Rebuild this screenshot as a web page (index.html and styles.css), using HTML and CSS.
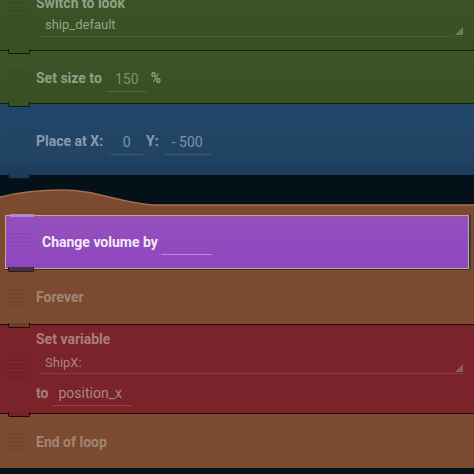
FILE: index.html
```html
<!DOCTYPE html>
<html>
<head>
<meta charset="utf-8">
<link rel="stylesheet" href="styles.css">
</head>
<body>
<div class="script">
  <div class="block green first">
    <div class="grip"></div>
    <div class="content">
      <div class="label">Switch to look</div>
      <div class="spinner"><span class="val">ship_default</span><span class="tri"></span></div>
    </div>
  </div>
  <div class="block green second">
    <div class="grip"></div>
    <div class="content row">
      <span class="label">Set size to</span>
      <span class="input w40">150</span>
      <span class="label">%</span>
    </div>
  </div>
  <div class="block blue">
    <div class="grip"></div>
    <div class="content row">
      <span class="label">Place at X:</span>
      <span class="input w33">0</span>
      <span class="label">Y:</span>
      <span class="input w47">- 500</span>
    </div>
  </div>
  <div class="forever">
    <svg class="hat" viewBox="0 0 474 17" width="474" height="17" preserveAspectRatio="none">
      <path d="M0 8 C 20 3, 38 1, 62 1 C 95 1, 118 13, 152 16 L474 16 L474 17 L0 17 Z" fill="#7c4a2e"/>
      <path d="M0 8 C 20 3, 38 1, 62 1 C 95 1, 118 13, 152 16 L474 16" fill="none" stroke="#a06f50" stroke-width="1.5"/>
    </svg>
    <div class="block brown hatbody">
      <div class="slot">
        <div class="block purple">
          <div class="grip"></div>
          <div class="content row">
            <span class="label">Change volume by</span>
            <span class="input w51"></span>
          </div>
        </div>
      </div>
      <div class="foreverrow">
        <div class="grip"></div>
        <div class="content row">
          <span class="label">Forever</span>
        </div>
      </div>
    </div>
  </div>
  <div class="block red">
    <div class="grip"></div>
    <div class="content">
      <div class="label">Set variable</div>
      <div class="spinner"><span class="val">ShipX:</span><span class="tri"></span></div>
      <div class="row torow">
        <span class="label">to</span>
        <span class="input w80 left">position_x</span>
      </div>
    </div>
  </div>
  <div class="block brown end">
    <div class="grip"></div>
    <div class="content row">
      <span class="label">End of loop</span>
    </div>
  </div>
</div>
</body>
</html>
```

FILE: styles.css
```css
* { box-sizing: border-box; }
html, body {
  margin: 0;
  padding: 0;
  width: 474px;
  height: 474px;
  overflow: hidden;
  background: #041118;
  font-family: Roboto, "Liberation Sans", sans-serif;
}
.script {
  display: flex;
  flex-direction: column;
  margin-top: -16px;
}
.block {
  position: relative;
  display: flex;
  align-items: center;
  border-bottom: 1px solid #141a0c;
}
.block::after {
  content: "";
  position: absolute;
  left: 8px;
  bottom: -4px;
  width: 20px;
  height: 4px;
  border: 1px solid #121a10;
  border-top: none;
  border-radius: 0 0 2px 2px;
  z-index: 2;
}
.grip {
  flex: none;
  width: 22px;
  height: 18px;
  margin: 0 7px 0 7px;
}
.content {
  flex: 1;
  min-width: 0;
}
.row {
  display: flex;
  align-items: center;
}
.label {
  font-weight: bold;
  font-size: 14px;
  line-height: 17px;
  white-space: nowrap;
}
.input {
  display: inline-block;
  font-size: 14px;
  line-height: 17px;
  text-align: center;
  border-bottom: 1px solid;
  padding-top: 3px;
  padding-bottom: 3px;
  margin: 0 4px;
  position: relative;
  top: 1px;
}
.w40 { width: 40px; margin-left: 5px; }
.w33 { width: 33px; margin-left: 7px; margin-right: 3px; }
.w47 { width: 47px; margin-left: 5px; }
.w51 { width: 51px; margin-left: 3px; }
.w80 { width: 80px; }
.left { text-align: left; padding-left: 6px; margin-left: 4px; }

.spinner {
  position: relative;
  margin-left: 4px;
  margin-right: 11px;
  height: 25px;
  padding-left: 5px;
  padding-top: 4px;
  font-size: 13px;
  line-height: 17px;
  border-bottom: 1px solid;
}
.tri {
  position: absolute;
  right: 0;
  bottom: 1px;
  width: 0;
  height: 0;
  border-left: 8px solid transparent;
  border-bottom: 8px solid;
}

/* green */
.green { background: linear-gradient(#3d5428, #384f22); border-bottom-color: #151d0d; }
.green::after { background: #385022; }
.green .label { color: #93a085; }
.green .spinner { color: #97a28c; border-bottom-color: #465d33; }
.green .tri { color: #6d7d62; }
.green .input { color: #7f9070; border-bottom-color: #53693f; }
.green .grip { background: repeating-linear-gradient(to bottom, #364c21 0 1px, transparent 1px 4px); }
.first { height: 67px; align-items: flex-start; padding-top: 11px; }
.first .grip { margin-top: 8px; height: 30px; }
.second { height: 53px; padding-top: 3px; }

/* blue */
.blue { background: linear-gradient(#224667 0, #214465 70%, #1d3a5b 100%); height: 71px; border-bottom: none; padding-top: 4px; }
.blue::after { background: #1d3a5a; border-color: #0a1a28; bottom: -4px; }
.blue .label { color: #8a9bb0; }
.blue .input { color: #7f93a8; border-bottom-color: #3a5a7a; }
.blue .grip { background: repeating-linear-gradient(to bottom, #1f4262 0 1px, transparent 1px 4px); }

/* forever */
.forever {
  margin-top: 14px;
  display: flex;
  flex-direction: column;
}
.hat { display: block; }
.brown { background: #7c4a2e; }
.hatbody {
  flex-direction: column;
  align-items: stretch;
  height: 119px;
  border-bottom-color: #1e0f08;
}
.brown::after { background: #6f3f25; border-color: #1a0c06; }
.brown .label { color: #a08676; }
.brown .grip { background: repeating-linear-gradient(to bottom, #744429 0 1px, transparent 1px 4px); }
.slot {
  padding: 10px 6px 0 6px;
}
.foreverrow {
  display: flex;
  align-items: center;
  height: 55px;
  padding-top: 4px;
}

/* purple */
.purple {
  height: 52px;
  background: linear-gradient(#9550bd, #8f47bf);
  border: none;
  box-shadow: 0 0 0 1px #c7a688, 2px 0 0 1px #2e3a40, 0 1px 0 1px #3a2a2a;
}
.purple::after { background: #4a3040; border-color: #2a1a20; bottom: -4px; left: 2px; width: 24px; }
.purple::before {
  content: "";
  position: absolute;
  left: 4px;
  top: -2px;
  width: 24px;
  height: 3px;
  background: #b78ad0;
}
.purple .grip { margin-left: 3px; margin-right: 11px; background: repeating-linear-gradient(to bottom, #8a44b4 0 1px, transparent 1px 4px); }
.purple .label { color: #f3e9f8; }
.purple .input { border-bottom-color: #b98bd8; height: 23px; }

/* red */
.red {
  background: #7b232a;
  height: 89px;
  align-items: flex-start;
  padding-top: 6px;
  border-bottom-color: #25080a;
}
.red::after { background: #72202a; border-color: #22070a; }
.red .grip { margin-top: 25px; height: 22px; background: repeating-linear-gradient(to bottom, #711f26 0 1px, transparent 1px 4px); }
.red .label { color: #a77f80; }
.red .spinner { color: #a98587; border-bottom-color: #8a3a40; height: 26px; padding-top: 6px; }
.red .tri { color: #8d5a5e; }
.red .input { color: #a98587; border-bottom-color: #94464c; }
.torow { margin-top: 7px; }

/* end */
.end { height: 54px; border-bottom: none; padding-top: 2px; }
.end::after { display: none; }
```
